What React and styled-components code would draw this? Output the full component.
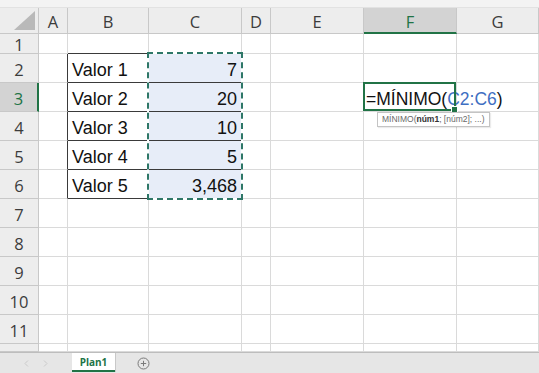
import React from "react";
import styled, { createGlobalStyle, css } from "styled-components";

const GREEN = "#217346";
const GRID = "#dadada";
const HEAD_LINE = "#c8c8c8";
const BOX = "#3a3a3a";

const cols = ["A", "B", "C", "D", "E", "F", "G"];
const rows = [1, 2, 3, 4, 5, 6, 7, 8, 9, 10, 11, 12];

const data = {
  B2: "Valor 1", C2: 7,
  B3: "Valor 2", C3: 20,
  B4: "Valor 3", C4: 10,
  B5: "Valor 4", C5: 5,
  B6: "Valor 5", C6: "3,468",
};

const inTable = (c, r) => (c === "B" || c === "C") && r >= 2 && r <= 6;

const GlobalStyle = createGlobalStyle`
  html, body { margin: 0; padding: 0; background: #fff; }
  body { font-family: "Liberation Sans", Arial, sans-serif; }
`;

const Page = styled.div`
  width: 539px;
  height: 373px;
  display: flex;
  flex-direction: column;
  overflow: hidden;
`;

const TopStrip = styled.div`
  height: 8px;
  flex: none;
  background: #f3f3f3;
  border-bottom: 1px solid #e2e2e2;
  box-sizing: border-box;
`;

const Sheet = styled.div`
  flex: 1;
  display: grid;
  grid-template-columns: 39px 29px 81px 93px 29px 93px 93px 1fr;
  grid-template-rows: 26px 20px repeat(10, 29px) 1fr;
  overflow: hidden;
  background: #fff;
`;

/* rows/cols are 1-based grid lines: header row/col = 1 */
const placed = css`
  grid-row: ${(p) => p.$row};
  grid-column: ${(p) => p.$col};
`;

const headBase = css`
  ${placed};
  box-sizing: border-box;
  display: flex;
  align-items: center;
  justify-content: center;
  font-family: "Open Sans", "Noto Sans", sans-serif;
  font-size: 16.5px;
  color: #3c3c3c;
  background: ${(p) => (p.$active ? "#d3d3d3" : "#ededed")};
  ${(p) => p.$active && `color: ${GREEN};`}
`;

const Corner = styled.div`
  ${headBase};
  border-right: 1px solid ${HEAD_LINE};
  border-bottom: 1px solid ${HEAD_LINE};
  align-items: flex-end;
  justify-content: flex-end;
  padding: 0 3px 3px 0;
`;

const ColHead = styled.div`
  ${headBase};
  padding-top: 2px;
  border-right: 1px solid ${HEAD_LINE};
  border-bottom: ${(p) => (p.$active ? `2px solid ${GREEN}` : `1px solid ${HEAD_LINE}`)};
`;

const RowHead = styled.div`
  ${headBase};
  padding-top: 2px;
  border-bottom: 1px solid ${HEAD_LINE};
  border-right: ${(p) => (p.$active ? `2px solid ${GREEN}` : `1px solid ${HEAD_LINE}`)};
`;

const Cell = styled.div`
  ${placed};
  position: relative;
  box-sizing: border-box;
  display: flex;
  align-items: flex-end;
  justify-content: ${(p) => (p.$num ? "flex-end" : "flex-start")};
  padding: 0 4px 1px 4px;
  font-size: 18px;
  color: #111;
  white-space: nowrap;
  background: ${(p) => (p.$fill ? "#e7edf8" : "transparent")};
  border-right: 1px solid ${(p) => (p.$darkRight ? BOX : GRID)};
  border-bottom: 1px solid ${(p) => (p.$darkBottom ? BOX : GRID)};
  ${(p) => p.$overflow && "overflow: visible; z-index: 2;"}
`;

const ActiveFrame = styled.div`
  position: absolute;
  left: -1px;
  top: -1px;
  width: calc(100% + 1px);
  height: calc(100% + 1px);
  box-sizing: border-box;
  border: 2px solid ${GREEN};
  pointer-events: none;
  &::after {
    content: "";
    position: absolute;
    right: -4px;
    bottom: -4px;
    width: 5px;
    height: 5px;
    background: ${GREEN};
    border: 1px solid #fff;
  }
`;

const Formula = styled.span`
  font-size: 17.5px;
  margin-left: -2px;
  color: #111;
`;

const Ref = styled.span`
  color: #3f6fc2;
`;

const Tip = styled.div`
  position: absolute;
  left: 13px;
  top: calc(100% + 1px);
  padding: 1px 4px 2px 4px;
  background: #fff;
  border: 1px solid #c4c4c4;
  box-shadow: 1px 1px 1px rgba(0, 0, 0, 0.08);
  font-size: 8.5px;
  color: #6a6a6a;
  white-space: nowrap;
  & b {
    color: #333;
  }
`;

const Marquee = styled.div`
  grid-column: 4;
  grid-row: 3 / 8;
  margin: -2px -1px -1px -2px;
  box-sizing: border-box;
  border: 2px solid #fff;
  position: relative;
  z-index: 3;
  pointer-events: none;
  &::after {
    content: "";
    position: absolute;
    inset: -2px;
    border: 2px dashed #2e7767;
  }
`;

const TabBar = styled.div`
  height: 21px;
  flex: none;
  box-sizing: border-box;
  display: flex;
  align-items: stretch;
  background: #e6e6e6;
  border-top: 1px solid #bdbdbd;
`;

const Nav = styled.div`
  width: 72px;
  display: flex;
  align-items: center;
  justify-content: center;
  gap: 14px;
  color: #c9c9c9;
`;

const Tab = styled.div`
  width: 43px;
  box-sizing: border-box;
  display: flex;
  align-items: center;
  justify-content: center;
  background: #fff;
  border-bottom: 2px solid ${GREEN};
  margin-bottom: 1px;
  color: ${GREEN};
  font-family: "Open Sans", "Noto Sans", sans-serif;
  font-weight: 700;
  font-size: 10px;
  box-shadow: 1px 0 0 #c8c8c8;
`;

const AddSheet = styled.div`
  margin-left: 22px;
  display: flex;
  align-items: center;
  color: #7a7a7a;
`;

function CornerTriangle() {
  return (
    <svg width="21" height="19" viewBox="0 0 21 19">
      <polygon points="21,0 21,19 0,19" fill="#b9b9b9" />
    </svg>
  );
}

function Chevron({ dir }) {
  return (
    <svg width="5" height="7" viewBox="0 0 5 7">
      <path
        d={dir === "left" ? "M4 0.5 L1 3.5 L4 6.5" : "M1 0.5 L4 3.5 L1 6.5"}
        stroke="currentColor"
        strokeWidth="1"
        fill="none"
      />
    </svg>
  );
}

function PlusCircle() {
  return (
    <svg width="13" height="13" viewBox="0 0 13 13">
      <circle cx="6.5" cy="6.5" r="5.5" stroke="currentColor" strokeWidth="1" fill="none" />
      <path d="M6.5 3.8 V9.2 M3.8 6.5 H9.2" stroke="currentColor" strokeWidth="1" />
    </svg>
  );
}

export default function App() {
  return (
    <>
      <GlobalStyle />
      <Page>
        <TopStrip />
        <Sheet>
          <Corner $row={1} $col={1}>
            <CornerTriangle />
          </Corner>
          {cols.map((c, i) => (
            <ColHead key={c} $row={1} $col={i + 2} $active={c === "F"}>
              {c}
            </ColHead>
          ))}
          {rows.map((r) => (
            <React.Fragment key={r}>
              <RowHead $row={r + 1} $col={1} $active={r === 3}>
                {r <= 11 ? r : ""}
              </RowHead>
              {cols.map((c, i) => {
                const id = c + r;
                const value = data[id];
                const next = cols[i + 1];
                const active = id === "F3";
                return (
                  <Cell
                    key={id}
                    $row={r + 1}
                    $col={i + 2}
                    $num={c === "C"}
                    $fill={c === "C" && r >= 2 && r <= 6}
                    $darkRight={inTable(c, r) || (next && inTable(next, r))}
                    $darkBottom={inTable(c, r) || inTable(c, r + 1)}
                    $overflow={active}
                  >
                    {value}
                    {active && (
                      <>
                        <Formula>
                          =MÍNIMO(<Ref>C2:C6</Ref>)
                        </Formula>
                        <ActiveFrame />
                        <Tip>
                          MÍNIMO(<b>núm1</b>; [núm2]; ...)
                        </Tip>
                      </>
                    )}
                  </Cell>
                );
              })}
            </React.Fragment>
          ))}
          <Marquee />
        </Sheet>
        <TabBar>
          <Nav>
            <Chevron dir="left" />
            <Chevron dir="right" />
          </Nav>
          <Tab>Plan1</Tab>
          <AddSheet>
            <PlusCircle />
          </AddSheet>
        </TabBar>
      </Page>
    </>
  );
}
